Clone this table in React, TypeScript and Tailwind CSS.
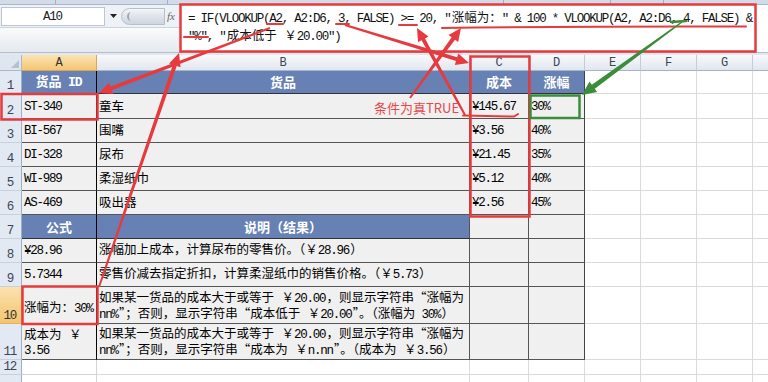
import React from "react";

const LAT = "inline-block font-['Liberation_Mono',monospace] tracking-[-1.25px] whitespace-pre pr-[1.25px]";
const CJK = "inline-block font-['Noto_Sans_CJK_SC',sans-serif] whitespace-pre";

function T({ s }: { s: string }) {
  const parts = s.split(/([\x20-\x7E\u00A5]+)/).filter((p) => p.length > 0);
  return (
    <span>
      {parts.map((p, i) =>
        /^[\x20-\x7E\u00A5]+$/.test(p) ? (
          <span key={i} className={LAT}>
            {p}
          </span>
        ) : (
          <span key={i} className={CJK}>
            {p}
          </span>
        )
      )}
    </span>
  );
}

function RowH({ n, sel }: { n: string; sel?: boolean }) {
  return (
    <div
      className={
        sel
          ? "w-[22px] shrink-0 bg-gradient-to-b from-[#fae2ae] to-[#f4c46e] border-r border-r-[#d7a552] border-b border-b-[#e2b468] flex items-end justify-center leading-[13px] text-[#333]"
          : "w-[22px] shrink-0 bg-[#e3e9f2] border-r border-r-[#9db0c6] border-b border-b-[#c6d1de] flex items-end justify-center leading-[13px] text-[#3a4658]"
      }
    >
      <T s={n} />
    </div>
  );
}

function ColH({ w, sel, l }: { w: string; sel?: boolean; l: string }) {
  return (
    <div
      className={`${w} shrink-0 flex items-center justify-center border-r border-b ${
        sel
          ? "bg-gradient-to-b from-[#fae3b2] to-[#f5c673] border-r-[#d9a757] border-b-[#d9a757] text-[#333]"
          : "bg-gradient-to-b from-[#f8f9fb] to-[#e1e7ef] border-r-[#c3cdda] border-b-[#a5b5c8] text-[#3a4658]"
      }`}
    >
      <T s={l} />
    </div>
  );
}

function Tail({ last }: { last?: boolean }) {
  return (
    <>
      <div className="w-[56px] shrink-0 border-r border-b border-[#dadada]" />
      <div className="w-[56px] shrink-0 border-r border-b border-[#dadada]" />
      <div className="w-[56px] shrink-0 border-r border-b border-[#dadada]" />
      <div className={last ? "flex-1" : "flex-1 border-b border-[#dadada]"} />
    </>
  );
}

const HDR = "bg-[#6781b5] text-white font-bold text-[13px] leading-[16px] flex items-center justify-center whitespace-nowrap";
const DAT = "bg-[#f0f0f0] flex items-end pb-[3px] pl-[2px] leading-[16px] whitespace-nowrap overflow-hidden";
const BA = "border-r border-r-black border-b border-b-[#555]";
const BB = "border-r border-r-[#555] border-b border-b-[#555]";
const BD = "border-r border-r-[#444] border-b border-b-[#555]";

function DataRow({ n, a, b, c, d }: { n: string; a: string; b: string; c: string; d: string }) {
  return (
    <div className="flex h-[24px]">
      <RowH n={n} />
      <div className={`w-[75px] shrink-0 ${DAT} ${BA}`}>
        <T s={a} />
      </div>
      <div className={`w-[373px] shrink-0 ${DAT} ${BB}`}>
        <T s={b} />
      </div>
      <div className={`w-[59px] shrink-0 ${DAT} ${BB}`}>
        <T s={c} />
      </div>
      <div className={`w-[56px] shrink-0 ${DAT} ${BD}`}>
        <T s={d} />
      </div>
      <Tail />
    </div>
  );
}

function arrowPts(
  x1: number,
  y1: number,
  x2: number,
  y2: number,
  w0: number,
  w1: number,
  hw: number,
  hl: number
) {
  const dx = x2 - x1;
  const dy = y2 - y1;
  const len = Math.hypot(dx, dy);
  const ux = dx / len;
  const uy = dy / len;
  const px = -uy;
  const py = ux;
  const nx = x2 - ux * hl;
  const ny = y2 - uy * hl;
  const pts = [
    [x1 + (px * w0) / 2, y1 + (py * w0) / 2],
    [nx + (px * w1) / 2, ny + (py * w1) / 2],
    [nx + (px * hw) / 2, ny + (py * hw) / 2],
    [x2, y2],
    [nx - (px * hw) / 2, ny - (py * hw) / 2],
    [nx - (px * w1) / 2, ny - (py * w1) / 2],
    [x1 - (px * w0) / 2, y1 - (py * w0) / 2],
  ];
  return pts.map((p) => `${p[0].toFixed(1)},${p[1].toFixed(1)}`).join(" ");
}

const RED = "#e63b3e";
const GREEN = "#3b8c3b";

const redArrows: [number, number, number, number][] = [
  [270, 28, 99, 93],
  [99, 287, 179, 53],
  [345, 25, 469, 63],
  [465, 115, 417, 28],
  [410, 98, 461, 28],
];

export default function App() {
  return (
    <div className="relative w-[768px] h-[382px] overflow-hidden bg-white text-[12.5px] text-black">
      {/* top ribbon strip */}
      <div className="h-[5px] flex bg-[#d2dbe7] border-b border-b-[#a9b7ca]">
        <div className="w-[56px] border-r border-r-[#9fb0c4]" />
        <div className="w-[112px] border-r border-r-[#9fb0c4]" />
        <div className="w-[336px] border-r border-r-[#9fb0c4]" />
        <div className="w-[107px] border-r border-r-[#9fb0c4]" />
        <div className="w-[53px] border-r border-r-[#9fb0c4]" />
        <div className="flex-1" />
      </div>

      {/* formula bar */}
      <div className="flex h-[47px]">
        <div className="w-[180px] shrink-0 flex flex-col">
          <div className="h-[23px] flex items-center bg-[#eef1f5] border-b border-b-[#cbd3dd]">
            <div className="ml-[1px] w-[104px] h-[19px] bg-white border border-[#bcc6d3] flex items-center justify-center text-[#222] leading-[15px]">
              <T s="A10" />
            </div>
            <svg className="ml-[5px]" width="7" height="4" viewBox="0 0 7 4">
              <path d="M0 0H7L3.5 4Z" fill="#222" />
            </svg>
            <div className="ml-[4px] w-[44px] h-[17px] rounded-l-full border border-[#b5bfcc] bg-gradient-to-b from-[#f4f6f8] via-[#dfe4ea] to-[#cfd6df] flex items-center pl-[5px]">
              <div className="w-[6px] h-[9px] rounded-l-full border-l-2 border-[#9aa6b5]" />
            </div>
            <span className="ml-[2px] italic text-[11px] text-[#666] font-['Liberation_Serif',serif]">fx</span>
          </div>
          <div className="flex-1 bg-gradient-to-b from-[#fafbfc] to-[#e5e9ee]" />
        </div>
        <div className="flex-1 bg-white pl-[8px] pt-[4px] leading-[15px] whitespace-nowrap text-[#111]">
          <div>
            <T s={'= IF(VLOOKUP(A2, A2:D6, 3, FALSE) >= 20, "涨幅为：" & 100 * VLOOKUP(A2, A2:D6, 4, FALSE) &'} />
          </div>
          <div>
            <T s={'"%", "成本低于 ￥20.00")'} />
          </div>
        </div>
      </div>

      {/* separator */}
      <div className="h-[3px] bg-[#e3e8ee] border-t border-t-[#b3bfcd]" />

      {/* column headers */}
      <div className="flex h-[16px] text-[12px] leading-[14px]">
        <div className="w-[22px] shrink-0 relative bg-[#dfe6ef] border-r border-b border-[#a9b9cc]">
          <svg className="absolute right-[2px] bottom-[2px]" width="8" height="8" viewBox="0 0 8 8">
            <path d="M8 0V8H0Z" fill="#b6c1d0" />
          </svg>
        </div>
        <ColH w="w-[75px]" sel l="A" />
        <ColH w="w-[373px]" l="B" />
        <ColH w="w-[59px]" l="C" />
        <ColH w="w-[56px]" l="D" />
        <ColH w="w-[56px]" l="E" />
        <ColH w="w-[56px]" l="F" />
        <ColH w="w-[56px]" l="G" />
        <div className="flex-1 bg-gradient-to-b from-[#f8f9fb] to-[#e1e7ef] border-b border-b-[#a5b5c8]" />
      </div>

      {/* row 1 header */}
      <div className="flex h-[23px]">
        <RowH n="1" />
        <div className={`w-[75px] shrink-0 ${HDR} border-r border-r-black border-b border-b-[#333]`}>
          <T s="货品 ID" />
        </div>
        <div className={`w-[373px] shrink-0 ${HDR} border-r border-r-[#56698f] border-b border-b-[#333]`}>
          <T s="货品" />
        </div>
        <div className={`w-[59px] shrink-0 ${HDR} border-r border-r-[#56698f] border-b border-b-[#333]`}>
          <T s="成本" />
        </div>
        <div className={`w-[56px] shrink-0 ${HDR} border-r border-r-[#444] border-b border-b-[#333]`}>
          <T s="涨幅" />
        </div>
        <Tail />
      </div>

      {/* row 2 (height 25) */}
      <div className="flex h-[25px]">
        <RowH n="2" />
        <div className={`w-[75px] shrink-0 ${DAT} ${BA}`}>
          <T s="ST-340" />
        </div>
        <div className={`w-[373px] shrink-0 ${DAT} ${BB}`}>
          <T s="童车" />
        </div>
        <div className={`w-[59px] shrink-0 ${DAT} ${BB}`}>
          <T s="¥145.67" />
        </div>
        <div className={`w-[56px] shrink-0 ${DAT} ${BD}`}>
          <T s="30%" />
        </div>
        <Tail />
      </div>

      <DataRow n="3" a="BI-567" b="围嘴" c="¥3.56" d="40%" />
      <DataRow n="4" a="DI-328" b="尿布" c="¥21.45" d="35%" />
      <DataRow n="5" a="WI-989" b="柔湿纸巾" c="¥5.12" d="40%" />
      <DataRow n="6" a="AS-469" b="吸出器" c="¥2.56" d="45%" />

      {/* row 7 header */}
      <div className="flex h-[24px]">
        <RowH n="7" />
        <div className={`w-[75px] shrink-0 ${HDR} border-r border-r-black border-b border-b-[#333]`}>
          <T s="公式" />
        </div>
        <div className={`w-[373px] shrink-0 ${HDR} border-r border-r-[#555] border-b border-b-[#333]`}>
          <T s="说明（结果）" />
        </div>
        <div className={`w-[59px] shrink-0 ${DAT} ${BB}`} />
        <div className={`w-[56px] shrink-0 ${DAT} ${BD}`} />
        <Tail />
      </div>

      <DataRow n="8" a="¥28.96" b="涨幅加上成本，计算尿布的零售价。（￥28.96）" c="" d="" />
      <DataRow n="9" a="5.7344" b="零售价减去指定折扣，计算柔湿纸巾的销售价格。（￥5.73）" c="" d="" />

      {/* row 10 */}
      <div className="flex h-[37px]">
        <RowH n="10" sel />
        <div className={`w-[75px] shrink-0 ${DAT} ${BA} pb-[6px] leading-[14px]`}>
          <T s="涨幅为：30%" />
        </div>
        <div className={`w-[373px] shrink-0 bg-[#f0f0f0] pl-[2px] pb-[1px] leading-[14px] whitespace-nowrap overflow-hidden flex flex-col justify-end ${BB}`}>
          <div>
            <T s="如果某一货品的成本大于或等于 ￥20.00，则显示字符串“涨幅为" />
          </div>
          <div>
            <T s="nn%”；否则，显示字符串“成本低于 ￥20.00”。（涨幅为 30%）" />
          </div>
        </div>
        <div className={`w-[59px] shrink-0 ${DAT} ${BB}`} />
        <div className={`w-[56px] shrink-0 ${DAT} ${BD}`} />
        <Tail />
      </div>

      {/* row 11 */}
      <div className="flex h-[36px]">
        <RowH n="11" />
        <div className={`w-[75px] shrink-0 bg-[#f0f0f0] pl-[2px] pb-[1px] leading-[14px] whitespace-nowrap overflow-hidden flex flex-col justify-end ${BA}`}>
          <div>
            <T s="成本为 ￥" />
          </div>
          <div>
            <T s="3.56" />
          </div>
        </div>
        <div className={`w-[373px] shrink-0 bg-[#f0f0f0] pl-[2px] pb-[1px] leading-[14px] whitespace-nowrap overflow-hidden flex flex-col justify-end ${BB}`}>
          <div>
            <T s="如果某一货品的成本大于或等于 ￥20.00，则显示字符串“涨幅为" />
          </div>
          <div>
            <T s="nn%”；否则，显示字符串“成本为 ￥n.nn”。（成本为 ￥3.56）" />
          </div>
        </div>
        <div className={`w-[59px] shrink-0 ${DAT} ${BB}`} />
        <div className={`w-[56px] shrink-0 ${DAT} ${BD}`} />
        <Tail />
      </div>

      {/* row 12 */}
      <div className="flex h-[15px]">
        <RowH n="12" />
        <div className="w-[75px] shrink-0 border-r border-b border-[#d4d4d4]" />
        <div className="w-[373px] shrink-0 border-r border-b border-[#dadada]" />
        <div className="w-[59px] shrink-0 border-r border-b border-[#dadada]" />
        <div className="w-[56px] shrink-0 border-r border-b border-[#dadada]" />
        <Tail />
      </div>

      {/* row 13 */}
      <div className="flex h-[22px]">
        <RowH n="13" />
        <div className="w-[75px] shrink-0 border-r border-[#d4d4d4]" />
        <div className="w-[373px] shrink-0 border-r border-[#dadada]" />
        <div className="w-[59px] shrink-0 border-r border-[#dadada]" />
        <div className="w-[56px] shrink-0 border-r border-[#dadada]" />
        <Tail last />
      </div>

      {/* annotations overlay */}
      <svg
        className="absolute left-0 top-0 pointer-events-none"
        width="768"
        height="382"
        viewBox="0 0 768 382"
      >
        <g fill="none" stroke={RED} strokeWidth="2.5">
          <rect x="180.5" y="4.5" width="575" height="47" />
          <rect x="1.5" y="94" width="96" height="25.5" />
          <rect x="470.5" y="56.5" width="59" height="160" />
          <rect x="22.5" y="286.5" width="75" height="37.5" />
        </g>
        <rect x="530.5" y="95.5" width="49" height="22.5" fill="none" stroke={GREEN} strokeWidth="2.5" />
        <g stroke={RED} strokeWidth="2" strokeLinecap="round" fill="none">
          <line x1="267" y1="24" x2="283" y2="24" />
          <line x1="336" y1="24" x2="349" y2="24" />
          <line x1="399" y1="25" x2="417" y2="25" />
          <path d="M442 28 Q 600 26 746 26.5" />
          <line x1="184" y1="37" x2="208" y2="37" />
          <path d="M463 115.5 L 514 116.5 L 518 114" />
        </g>
        <line x1="671" y1="22" x2="686" y2="21" stroke={GREEN} strokeWidth="2.5" strokeLinecap="round" />
        {redArrows.map((a, i) => (
          <polygon key={i} points={arrowPts(a[0], a[1], a[2], a[3], 2, 4, 12, 13)} fill={RED} />
        ))}
        <polygon points={arrowPts(682, 22, 582, 95, 1.5, 5, 13, 14)} fill={GREEN} />
      </svg>
      <div className="absolute left-[374px] top-[99px] text-[13px] leading-[17px] text-[#e6484b] font-['Noto_Sans_CJK_SC',sans-serif] whitespace-nowrap">
        条件为真TRUE
      </div>
    </div>
  );
}
